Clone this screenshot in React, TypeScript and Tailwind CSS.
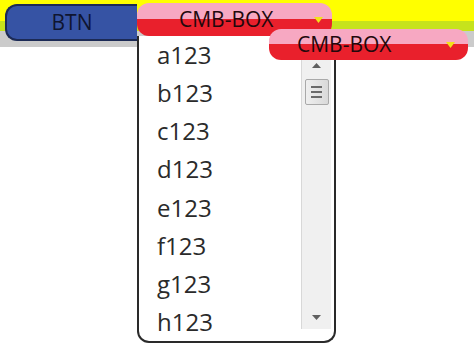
import type { ReactNode } from 'react';

const ITEMS = ['a123', 'b123', 'c123', 'd123', 'e123', 'f123', 'g123', 'h123'];

/** Small yellow "open" triangle drawn at the right end of a combo box. */
function ComboArrow() {
  return (
    <svg width="9" height="6" viewBox="0 0 9 6" className="shrink-0" aria-hidden="true">
      <polygon points="0,0 9,0 4.5,6" fill="#f2e21a" />
    </svg>
  );
}

interface ComboProps {
  label: ReactNode;
  className: string;
  labelClass: string;
}

/** Pink-over-red pill combo box; half/half fill via a hard-stop gradient. */
function Combo({ label, className, labelClass }: ComboProps) {
  return (
    <div
      className={`flex items-center rounded-[12px] bg-[linear-gradient(to_bottom,#f7a8c2_0_48%,#e9202c_48%_100%)] text-[21px] leading-none text-[#22080c] ${className}`}
    >
      <span className={labelClass}>{label}</span>
      <span className="flex-1" />
      <ComboArrow />
    </div>
  );
}

function ScrollBar() {
  return (
    <div className="mr-[3px] mt-[18px] mb-[12px] flex w-[30px] flex-col items-center border-l border-[#d8d8d8] bg-[#f0f0f0]">
      <div className="flex h-[23px] w-full items-center justify-center">
        <svg width="9" height="5" viewBox="0 0 9 5" aria-hidden="true">
          <polygon points="4.5,0 9,5 0,5" fill="#606060" />
        </svg>
      </div>
      <div className="mt-[2px] flex h-[26px] w-[24px] flex-col items-center justify-center gap-[3px] rounded-[2px] border border-[#a9a9a9] bg-[linear-gradient(to_right,#efefef,#d9d9d9)]">
        <span className="h-[2px] w-[11px] bg-[#6a6a6a]" />
        <span className="h-[2px] w-[11px] bg-[#6a6a6a]" />
        <span className="h-[2px] w-[11px] bg-[#6a6a6a]" />
      </div>
      <div className="flex-1" />
      <div className="flex h-[24px] w-full items-center justify-center">
        <svg width="9" height="5" viewBox="0 0 9 5" aria-hidden="true">
          <polygon points="0,0 9,0 4.5,5" fill="#606060" />
        </svg>
      </div>
    </div>
  );
}

export default function App() {
  return (
    <div className="relative h-[347px] w-full overflow-hidden bg-white font-['Open_Sans','Noto_Sans',sans-serif]">
      {/* toolbar band: yellow / lime / grey strips */}
      <div className="flex h-[47px] items-start bg-[linear-gradient(to_bottom,#ffff00_0_21px,#c6e31c_21px_31px,#cbcbcb_31px_47px)] pl-[5px] pt-[3px]">
        <button
          type="button"
          className="mt-[1px] flex h-[37px] w-[132px] items-center justify-center rounded-l-[12px] border-2 border-r-0 border-[#1c2a55] bg-[#3653a4] text-[21px] leading-none text-[#0f1530]"
        >
          BTN
        </button>
        <Combo label="CMB-BOX" className="h-[33px] w-[195px] pr-[9px]" labelClass="pl-[42px]" />
      </div>

      {/* open drop-down list of the first combo */}
      <div className="absolute left-[137px] top-[36px] flex h-[307px] w-[199px] rounded-b-[12px] border-2 border-t-0 border-[#2a2a2a] bg-white">
        <ul className="flex flex-1 flex-col pl-[18px]">
          {ITEMS.map((item) => (
            <li key={item} className="flex h-[38.2px] items-center text-[24px] leading-none text-[#2a2a2a]">
              {item}
            </li>
          ))}
        </ul>
        <ScrollBar />
      </div>

      {/* second combo box lying over the list */}
      <Combo
        label="CMB-BOX"
        className="absolute left-[269px] top-[29px] h-[31px] w-[199px] pr-[13px]"
        labelClass="pl-[28px]"
      />
    </div>
  );
}
